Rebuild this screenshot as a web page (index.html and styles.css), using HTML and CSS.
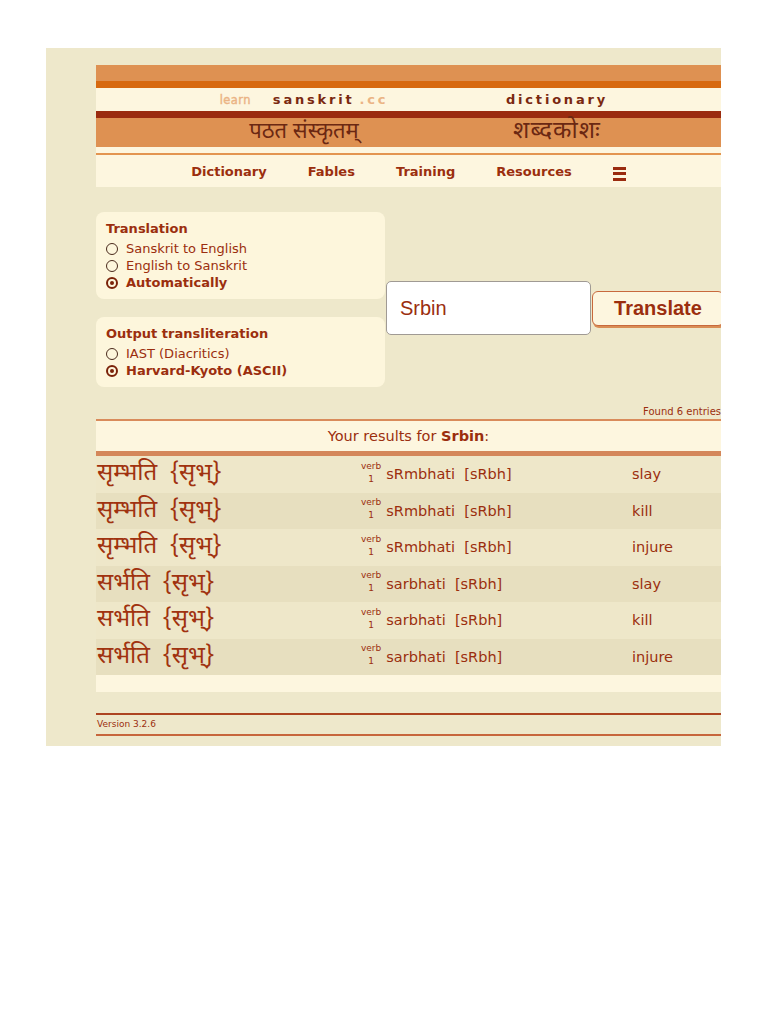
FILE: index.html
```html
<!DOCTYPE html>
<html lang="en">
<head>
<meta charset="utf-8">
<title>learnsanskrit.cc dictionary</title>
<link rel="stylesheet" href="styles.css">
</head>
<body>
<div class="page">
  <div class="content">
    <header class="banner">
      <div class="band band-light"></div>
      <div class="band band-dark"></div>
      <div class="titles">
        <span class="logo"><span class="logo-soft learn">learn</span><span class="logo-strong">sanskrit</span><span class="logo-soft">.cc</span></span>
        <span class="logo-strong">dictionary</span>
      </div>
      <div class="band band-red"></div>
      <div class="titles deva-titles">
        <span>पठत संस्कृतम्</span>
        <span class="kosha">शब्दकोशः</span>
      </div>
      <div class="band band-cream"></div>
      <div class="band band-line"></div>
      <nav class="nav">
        <span class="nav-item">Dictionary</span>
        <span class="nav-item">Fables</span>
        <span class="nav-item">Training</span>
        <span class="nav-item">Resources</span>
        <span class="burger"><i></i><i></i><i></i></span>
      </nav>
    </header>

    <section class="form-row">
      <div class="options">
        <div class="box">
          <div class="box-title">Translation</div>
          <div class="radio"><span class="dot"></span>Sanskrit to English</div>
          <div class="radio"><span class="dot"></span>English to Sanskrit</div>
          <div class="radio checked"><span class="dot"></span>Automatically</div>
        </div>
        <div class="box">
          <div class="box-title">Output transliteration</div>
          <div class="radio"><span class="dot"></span>IAST (Diacritics)</div>
          <div class="radio checked"><span class="dot"></span>Harvard-Kyoto (ASCII)</div>
        </div>
      </div>
      <div class="search">
        <input class="query" type="text" value="Srbin">
        <button class="go" type="button">Translate</button>
      </div>
    </section>

    <div class="found">Found 6 entries</div>
    <div class="results-head">Your results for <b>Srbin</b>:</div>

    <div class="row">
      <span class="deva">सृम्भति&nbsp; {सृभ्}</span>
      <span class="tr"><span class="gram"><span>verb</span><span>1</span></span>sRmbhati&nbsp; [sRbh]</span>
      <span class="en">slay</span>
    </div>
    <div class="row">
      <span class="deva">सृम्भति&nbsp; {सृभ्}</span>
      <span class="tr"><span class="gram"><span>verb</span><span>1</span></span>sRmbhati&nbsp; [sRbh]</span>
      <span class="en">kill</span>
    </div>
    <div class="row">
      <span class="deva">सृम्भति&nbsp; {सृभ्}</span>
      <span class="tr"><span class="gram"><span>verb</span><span>1</span></span>sRmbhati&nbsp; [sRbh]</span>
      <span class="en">injure</span>
    </div>
    <div class="row">
      <span class="deva">सर्भति&nbsp; {सृभ्}</span>
      <span class="tr"><span class="gram"><span>verb</span><span>1</span></span>sarbhati&nbsp; [sRbh]</span>
      <span class="en">slay</span>
    </div>
    <div class="row">
      <span class="deva">सर्भति&nbsp; {सृभ्}</span>
      <span class="tr"><span class="gram"><span>verb</span><span>1</span></span>sarbhati&nbsp; [sRbh]</span>
      <span class="en">kill</span>
    </div>
    <div class="row">
      <span class="deva">सर्भति&nbsp; {सृभ्}</span>
      <span class="tr"><span class="gram"><span>verb</span><span>1</span></span>sarbhati&nbsp; [sRbh]</span>
      <span class="en">injure</span>
    </div>
    <div class="filler"></div>

    <footer class="footer">Version 3.2.6</footer>
  </div>
</div>
</body>
</html>
```

FILE: styles.css
```css
body {
  margin: 0;
  background: #ffffff;
}

.page {
  margin: 48px 0 0 46px;
  width: 675px;
  height: 698px;
  box-sizing: border-box;
  padding: 17px 0 0 50px;
  background: #eee8cb;
  overflow: hidden;
  font-family: "DejaVu Sans", Verdana, sans-serif;
  color: #9b2e0e;
}

.content {
  width: 625px;
}

/* banner */
.band-light { height: 16px; background: #de9152; }
.band-dark { height: 7px; background: #d7690f; }
.band-red { height: 7px; background: #9a2b0f; }
.band-cream { height: 6px; background: #fdf6df; }
.band-line { height: 2px; background: #e39550; }

.titles {
  display: grid;
  grid-template-columns: 296px 210px;
  padding-left: 60px;
  height: 23px;
  line-height: 23px;
  background: #fdf6df;
  font-size: 13px;
  font-weight: bold;
  letter-spacing: 2.8px;
  text-align: center;
  white-space: nowrap;
}

.logo-soft { color: #ebb484; }
.logo-strong { color: #7a2810; }
.logo .learn {
  font-size: 11.5px;
  font-weight: normal;
  letter-spacing: 0.4px;
  -webkit-text-stroke: 0.4px #ebb484;
}
.logo .logo-strong { margin: 0 5px 0 22px; }

.deva-titles {
  height: 29px;
  line-height: 29px;
  background: #de9152;
  color: #6b2812;
  font-family: "Noto Sans Devanagari", "Lohit Devanagari", "FreeSans", sans-serif;
  font-size: 22px;
  font-weight: normal;
  letter-spacing: 0;
}
.kosha {
  font-size: 24px;
  letter-spacing: 1px;
}

.nav {
  display: flex;
  justify-content: center;
  align-items: center;
  gap: 41px;
  height: 32px;
  background: #fdf6df;
  font-size: 13px;
  font-weight: bold;
}

.burger {
  display: flex;
  flex-direction: column;
  gap: 2.5px;
  margin-top: 5px;
}
.burger i {
  display: block;
  width: 13px;
  height: 3px;
  background: #9a2b0f;
}

/* form */
.form-row {
  display: flex;
  margin-top: 25px;
}

.options {
  width: 289px;
  flex: none;
  display: flex;
  flex-direction: column;
  gap: 18px;
}

.box {
  background: #fdf6dc;
  border-radius: 8px;
  padding: 8px 10px;
  font-size: 13px;
  line-height: 17px;
}

.box-title {
  font-weight: bold;
  margin-bottom: 3px;
}

.radio {
  display: flex;
  align-items: center;
  gap: 8px;
}

.dot {
  width: 12px;
  height: 12px;
  box-sizing: border-box;
  border: 1.3px solid #4a2a1c;
  border-radius: 50%;
  display: flex;
  align-items: center;
  justify-content: center;
}

.checked {
  font-weight: bold;
}
.checked .dot {
  border: 2px solid #7a2208;
}
.checked .dot::after {
  content: "";
  width: 4px;
  height: 4px;
  border-radius: 50%;
  background: #7a2208;
}

.search {
  display: flex;
  align-items: center;
  margin-top: 69px;
  align-self: flex-start;
  flex: none;
}

.query {
  margin: 0 0 0 1px;
  width: 205px;
  height: 54px;
  box-sizing: border-box;
  border: 1px solid #a09a94;
  border-radius: 5px;
  background: #ffffff;
  padding: 0 0 0 13px;
  font-family: "Liberation Sans", Arial, sans-serif;
  font-size: 20px;
  color: #9b2e0e;
  outline: none;
}

.go {
  margin: 0 0 0 1px;
  width: 132px;
  height: 35px;
  box-sizing: border-box;
  border: 1px solid #c8693d;
  border-radius: 6px;
  background: #fdf6df;
  box-shadow: 1px 2px 0 #d98d55;
  font-family: "Liberation Sans", Arial, sans-serif;
  font-size: 20px;
  font-weight: bold;
  color: #9b2e0e;
  padding: 0;
  text-align: center;
}

/* results */
.found {
  margin-top: 18px;
  font-size: 10px;
  line-height: 14px;
  text-align: right;
  white-space: nowrap;
}

.results-head {
  border-top: 2px solid #d98b5b;
  border-bottom: 5px solid #d4875a;
  height: 30px;
  line-height: 30px;
  background: #fdf6df;
  text-align: center;
  font-size: 14.5px;
}

.row {
  display: grid;
  grid-template-columns: 264px 271px 1fr;
  align-items: center;
  height: 36.5px;
  padding-left: 1px;
  background: #eee7c9;
  font-size: 14.5px;
}
.row:nth-of-type(even) {
  background: #e7dfbf;
}

.deva {
  font-family: "Noto Sans Devanagari", "Lohit Devanagari", "FreeSans", sans-serif;
  font-size: 24px;
  line-height: 1;
  color: #a0320f;
  white-space: nowrap;
}

.tr {
  display: flex;
  align-items: center;
  white-space: nowrap;
}

.gram {
  display: flex;
  flex-direction: column;
  align-items: center;
  gap: 4px;
  font-size: 9px;
  line-height: 9px;
  margin-right: 5px;
  margin-top: -3px;
}

.filler {
  height: 17px;
  background: #fdf6df;
}

.footer {
  margin-top: 21px;
  border-top: 2px solid #ad4422;
  border-bottom: 2px solid #c7663c;
  height: 19px;
  line-height: 19px;
  padding-left: 1px;
  font-size: 9px;
}
```
